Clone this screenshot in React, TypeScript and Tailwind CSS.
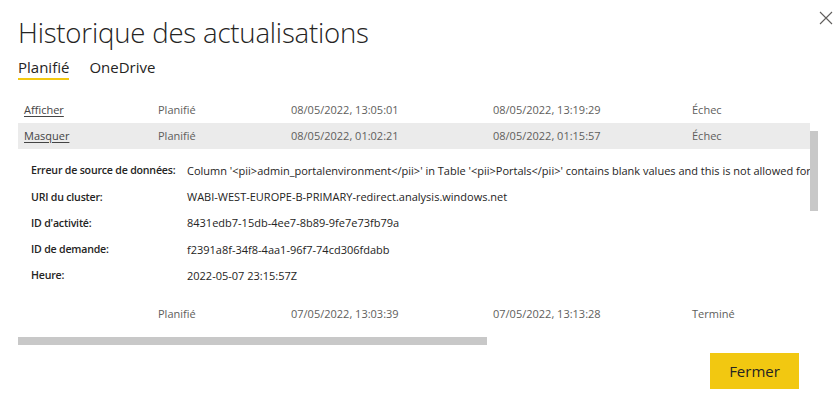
import React from "react";

type Run = { action?: string; type: string; start: string; end: string; status: string; open?: boolean };

const runs: Run[] = [
  { action: "Afficher", type: "Planifié", start: "08/05/2022, 13:05:01", end: "08/05/2022, 13:19:29", status: "Échec" },
  { action: "Masquer", type: "Planifié", start: "08/05/2022, 01:02:21", end: "08/05/2022, 01:15:57", status: "Échec", open: true },
  { type: "Planifié", start: "07/05/2022, 13:03:39", end: "07/05/2022, 13:13:28", status: "Terminé" },
  { type: "Planifié", start: "07/05/2022, 01:02:49", end: "07/05/2022, 01:12:18", status: "Terminé" },
];

const details = [
  ["Erreur de source de données:", "Column '<pii>admin_portalenvironment</pii>' in Table '<pii>Portals</pii>' contains blank values and this is not allowed for columns on the one side of a many-to-one relationship or for columns that are used as the primary key of a table."],
  ["URI du cluster:", "WABI-WEST-EUROPE-B-PRIMARY-redirect.analysis.windows.net"],
  ["ID d'activité:", "8431edb7-15db-4ee7-8b89-9fe7e73fb79a"],
  ["ID de demande:", "f2391a8f-34f8-4aa1-96f7-74cd306fdabb"],
  ["Heure:", "2022-05-07 23:15:57Z"],
];

function Row({ r, last }: { r: Run; last?: boolean }) {
  return (
    <div className={`grid grid-cols-[140px_133px_202px_199px_1fr] h-[26px] items-center text-[11px] text-[#605e5c] ${r.open ? "bg-[#ebebeb]" : ""} ${last ? "mt-[3px]" : ""}`}>
      <span className="pl-[6px]">
        {r.action && <a className="underline text-[#444] underline-offset-2">{r.action}</a>}
      </span>
      <span>{r.type}</span>
      <span>{r.start}</span>
      <span>{r.end}</span>
      <span>{r.status}</span>
    </div>
  );
}

export default function App() {
  return (
    <div className="w-[840px] h-[400px] bg-white relative overflow-hidden text-[#252423]" style={{ fontFamily: "'Open Sans', 'Noto Sans', sans-serif" }}>
      {/* close */}
      <button className="absolute right-[7px] top-[11px] w-[14px] h-[14px]">
        <svg viewBox="0 0 14 14" className="w-[14px] h-[14px]">
          <path d="M1 1L13 13M13 1L1 13" stroke="#605e5c" strokeWidth="1.1" />
        </svg>
      </button>

      <div className="pl-[18px] pt-[14px]">
        <h1 className="text-[27.6px] font-light leading-[36px] tracking-[-0.2px]">Historique des actualisations</h1>
        <div className="flex gap-[20px] mt-[7px] text-[15px] leading-[20px]">
          <span className="border-b-2 border-[#f2c811] pb-[1px]">Planifié</span>
          <span>OneDrive</span>
        </div>
      </div>

      <div className="ml-[18px] mt-[17px] w-[800px]">
        <div className="flex h-[240px]">
          <div className="w-[792px] overflow-hidden">
            <div className="w-[1200px]">
              <Row r={runs[0]} />
              <Row r={runs[1]} />
              <div className="pt-[9px] pb-[12px] text-[11px]">
                {details.map(([k, v]) => (
                  <div key={k} className="flex h-[26.3px] items-center">
                    <span className="w-[169px] pl-[13px] font-semibold text-[10.6px] text-[#252423] shrink-0 whitespace-nowrap tracking-[-0.2px]">{k}</span>
                    <span className="whitespace-nowrap text-[#252423]">{v}</span>
                  </div>
                ))}
              </div>
              <Row r={runs[2]} />
              <Row r={runs[3]} last />
            </div>
          </div>
          <div className="w-[8px] pt-[34px]">
            <div className="h-[80px] bg-[#c8c8c8]" />
          </div>
        </div>
        <div className="h-[8px]">
          <div className="w-[469px] h-[8px] bg-[#c8c8c8]" />
        </div>
      </div>

      <div className="flex justify-end pr-[41px] mt-[8px]">
        <button className="w-[89px] h-[36px] bg-[#f2c811] text-[15px] text-[#252423]">Fermer</button>
      </div>
    </div>
  );
}
